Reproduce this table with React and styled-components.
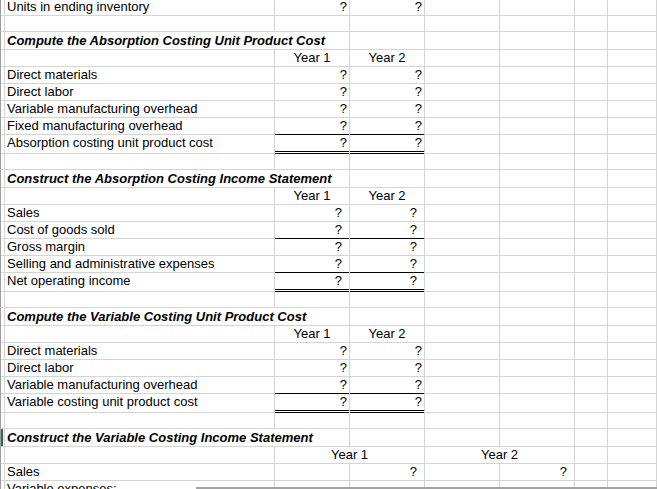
import React from "react";
import styled, { createGlobalStyle } from "styled-components";

const GlobalStyle = createGlobalStyle`
  html, body {
    margin: 0;
    padding: 0;
    background: #fff;
  }
  body {
    font-family: "Liberation Sans", Arial, sans-serif;
    font-size: 13px;
    color: #000;
  }
`;

const GRID = "#d4d4d4";

const Sheet = styled.div`
  position: relative;
  width: 657px;
  height: 489px;
  overflow: hidden;
`;

const Rows = styled.div`
  display: flex;
  flex-direction: column;
  margin-top: -2px;
`;

const Row = styled.div`
  display: grid;
  grid-template-columns: 5px 270px 75px 75px 75px 75px 33px 1fr;
  height: ${(p) => (p.$tall ? 19 : 17)}px;
`;

const Gutter = styled.div`
  box-sizing: border-box;
  border-left: 1px solid #9e9e9e;
  border-right: 1px solid ${GRID};
  border-bottom: 1px solid ${GRID};
  background: ${(p) =>
    p.$selected
      ? "linear-gradient(to right, #217346 2px, transparent 2px)"
      : "transparent"};
`;

const Cell = styled.div`
  box-sizing: border-box;
  grid-column: span ${(p) => p.$span || 1};
  border-right: 1px solid ${GRID};
  border-bottom: ${(p) =>
    p.$line === "double"
      ? "3px double #000"
      : p.$line === "single"
      ? "1px solid #000"
      : `1px solid ${GRID}`};
  padding: 1px ${(p) => (p.$wide ? 7 : 2)}px 0 2px;
  line-height: 16px;
  white-space: nowrap;
  text-align: ${(p) => p.$align || "left"};
`;

const Heading = styled(Cell)`
  font-weight: bold;
  font-style: italic;
`;

const Scrollbar = styled.div`
  position: absolute;
  left: 196px;
  right: 0;
  bottom: 0;
  height: 2px;
  background: #a3a3a3;
`;

const rows = [
  { label: "Units in ending inventory", b: "?", c: "?" },
  {},
  { head: "Compute the Absorption Costing Unit Product Cost" },
  { years: true },
  { label: "Direct materials", b: "?", c: "?" },
  { label: "Direct labor", b: "?", c: "?" },
  { label: "Variable manufacturing overhead", b: "?", c: "?" },
  { label: "Fixed manufacturing overhead", b: "?", c: "?", line: "single" },
  { label: "Absorption costing unit product cost", b: "?", c: "?", line: "double" },
  {},
  { head: "Construct the Absorption Costing Income Statement" },
  { years: true },
  { label: "Sales", b: "?", c: "?", wide: true },
  { label: "Cost of goods sold", b: "?", c: "?", wide: true, line: "single" },
  { label: "Gross margin", b: "?", c: "?", wide: true },
  { label: "Selling and administrative expenses", b: "?", c: "?", wide: true, line: "single" },
  { label: "Net operating income", b: "?", c: "?", wide: true, line: "double" },
  {},
  { head: "Compute the Variable Costing Unit Product Cost" },
  { years: true },
  { label: "Direct materials", b: "?", c: "?" },
  { label: "Direct labor", b: "?", c: "?" },
  { label: "Variable manufacturing overhead", b: "?", c: "?", line: "single" },
  { label: "Variable costing unit product cost", b: "?", c: "?", line: "double" },
  {},
  { head: "Construct the Variable Costing Income Statement", selected: true },
  { wideYears: true },
  { label: "Sales", c: "?", e: "?", wide: true },
  { label: "Variable expenses:" },
];

function Trailing({ from }) {
  // empty cells to fill the rest of the row
  const count = 8 - from;
  return Array.from({ length: count }, (_, i) => <Cell key={i} />);
}

function SheetRow({ row }) {
  const tall = row.line === "double";

  if (row.head) {
    return (
      <Row>
        <Gutter $selected={row.selected} />
        <Heading $span={2}>{row.head}</Heading>
        <Trailing from={3} />
      </Row>
    );
  }

  if (row.years) {
    return (
      <Row>
        <Gutter />
        <Cell />
        <Cell $align="center">Year 1</Cell>
        <Cell $align="center">Year 2</Cell>
        <Trailing from={4} />
      </Row>
    );
  }

  if (row.wideYears) {
    return (
      <Row>
        <Gutter />
        <Cell />
        <Cell $span={2} $align="center">
          Year 1
        </Cell>
        <Cell $span={2} $align="center">
          Year 2
        </Cell>
        <Trailing from={6} />
      </Row>
    );
  }

  return (
    <Row $tall={tall}>
      <Gutter />
      <Cell>{row.label}</Cell>
      <Cell $align="right" $wide={row.wide} $line={row.line}>
        {row.b}
      </Cell>
      <Cell $align="right" $wide={row.wide} $line={row.line}>
        {row.c}
      </Cell>
      <Cell />
      <Cell $align="right" $wide={row.wide}>
        {row.e}
      </Cell>
      <Trailing from={6} />
    </Row>
  );
}

export default function App() {
  return (
    <>
      <GlobalStyle />
      <Sheet>
        <Rows>
          {rows.map((row, i) => (
            <SheetRow key={i} row={row} />
          ))}
        </Rows>
        <Scrollbar />
      </Sheet>
    </>
  );
}
